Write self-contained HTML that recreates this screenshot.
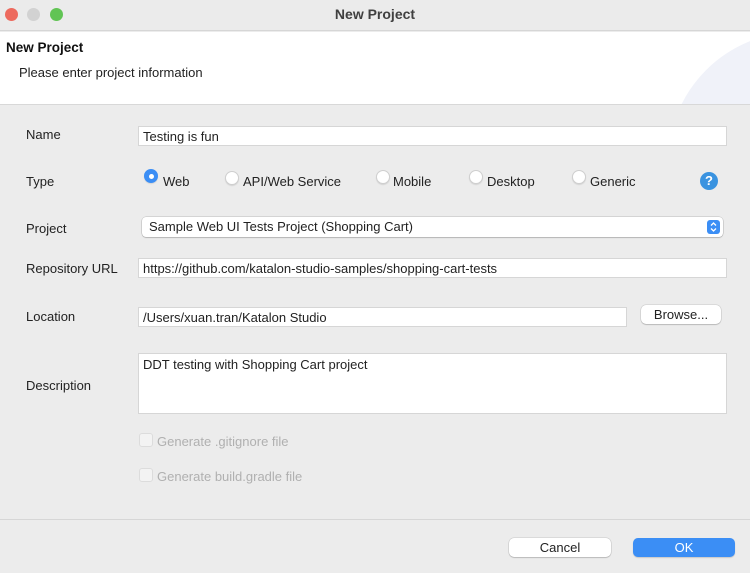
<!DOCTYPE html>
<html><head><style>
*{margin:0;padding:0;box-sizing:border-box}
body{width:750px;height:573px;background:#ececec;font-family:"Liberation Sans",sans-serif;font-size:13px;color:#222;position:relative;overflow:hidden}
.a{position:absolute}
.in{position:absolute;background:#fff;border:1px solid #d6d6d6;height:20px;padding:2px 4px;font-size:13px;line-height:15px}
.lbl{position:absolute;left:26px;font-size:13px}
.r{position:absolute;width:14px;height:14px;border-radius:50%;background:#fff;border:1px solid #cfcfcf;box-shadow:0 1px 1px rgba(0,0,0,.1)}
.cb{position:absolute;width:14px;height:14px;border-radius:3px;background:#f3f3f3;border:1px solid #dcdcdc}
.btn{position:absolute;background:#fff;border-radius:5px;box-shadow:0 0 0 .5px rgba(0,0,0,.15),0 1px 1px rgba(0,0,0,.15);text-align:center;font-size:13px;line-height:19px}
</style></head><body>
<div class="a" style="left:0;top:0;width:750px;height:31px;background:#ebebeb;border-bottom:1px solid #d6d6d6"></div>
<div class="a" style="left:5px;top:8px;width:13px;height:13px;border-radius:50%;background:#ed6a5e"></div>
<div class="a" style="left:27px;top:8px;width:13px;height:13px;border-radius:50%;background:#d2d2d2"></div>
<div class="a" style="left:50px;top:8px;width:13px;height:13px;border-radius:50%;background:#61c454"></div>
<div class="a" style="left:0;top:6px;width:750px;text-align:center;font-weight:bold;font-size:14px;color:#404040">New Project</div>
<div class="a" style="left:0;top:32px;width:750px;height:73px;background:#fff;border-bottom:1px solid #d8d8d8;overflow:hidden">
<div class="a" style="left:668px;top:0px;width:260px;height:260px;border-radius:50%;background:#f0f2f9"></div>
<div class="a" style="left:6px;top:8px;font-weight:bold;font-size:13.5px;color:#111">New Project</div>
<div class="a" style="left:19px;top:33px;font-size:13px">Please enter project information</div>
</div>
<div class="lbl" style="top:127px">Name</div>
<div class="in" style="left:138px;top:126px;width:589px">Testing is fun</div>
<div class="lbl" style="top:174px">Type</div>
<div class="r" style="left:144px;top:169px;background:#3b8ef5;border-color:#3b8ef5"><div class="a" style="left:4px;top:4px;width:5px;height:5px;border-radius:50%;background:#fff"></div></div>
<div class="a" style="left:163px;top:174px">Web</div>
<div class="r" style="left:225px;top:171px"></div><div class="a" style="left:243px;top:174px">API/Web Service</div>
<div class="r" style="left:376px;top:170px"></div><div class="a" style="left:393px;top:174px">Mobile</div>
<div class="r" style="left:469px;top:170px"></div><div class="a" style="left:487px;top:174px">Desktop</div>
<div class="r" style="left:572px;top:170px"></div><div class="a" style="left:590px;top:174px">Generic</div>
<div class="a" style="left:700px;top:172px;width:18px;height:18px;border-radius:50%;background:#3a93e0;color:#fff;font-weight:bold;font-size:13px;text-align:center;line-height:18px">?</div>
<div class="lbl" style="top:221px">Project</div>
<div class="a" style="left:142px;top:217px;width:581px;height:20px;background:#fff;border-radius:4px;box-shadow:0 0 0 .5px rgba(0,0,0,.2),0 1px 1px rgba(0,0,0,.15);padding:2px 7px">Sample Web UI Tests Project (Shopping Cart)</div>
<svg class="a" style="left:707px;top:220px" width="13" height="14" viewBox="0 0 13 14"><rect width="13" height="14" rx="3" fill="#3b8ef5"/><path d="M4 5.5L6.5 3L9 5.5M4 8.5L6.5 11L9 8.5" stroke="#fff" stroke-width="1.3" fill="none"/></svg>
<div class="lbl" style="top:261px">Repository URL</div>
<div class="in" style="left:138px;top:258px;width:589px">https://github.com/katalon-studio-samples/shopping-cart-tests</div>
<div class="lbl" style="top:309px">Location</div>
<div class="in" style="left:138px;top:307px;width:489px">/Users/xuan.tran/Katalon Studio</div>
<div class="btn" style="left:641px;top:305px;width:80px">Browse...</div>
<div class="lbl" style="top:378px">Description</div>
<div class="in" style="left:138px;top:353px;width:589px;height:61px;padding:3px 4px">DDT testing with Shopping Cart project</div>
<div class="cb" style="left:139px;top:433px"></div><div class="a" style="left:157px;top:434px;color:#b0b0b0">Generate .gitignore file</div>
<div class="cb" style="left:139px;top:468px"></div><div class="a" style="left:157px;top:469px;color:#b0b0b0">Generate build.gradle file</div>
<div class="a" style="left:0;top:519px;width:750px;border-top:1px solid #d6d6d6"></div>
<div class="btn" style="left:509px;top:538px;width:102px">Cancel</div>
<div class="btn" style="left:633px;top:538px;width:102px;background:#3b8ef5;color:#fff;box-shadow:0 1px 1px rgba(0,0,0,.15)">OK</div>
</body></html>
